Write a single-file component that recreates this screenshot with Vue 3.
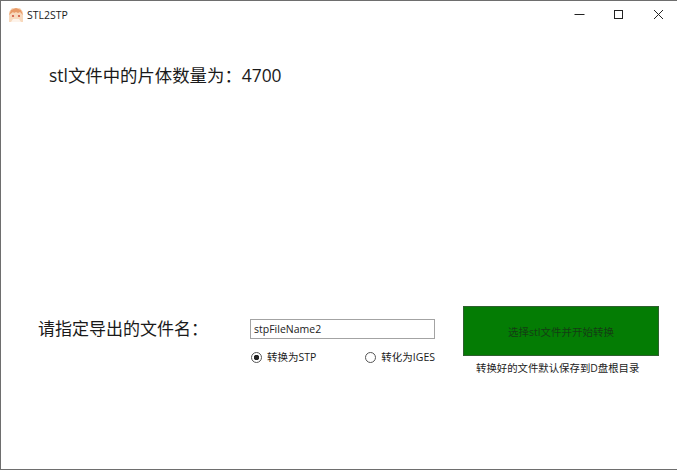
<script setup>
import { ref } from 'vue'

const fileName = ref('stpFileName2')
const format = ref('stp')
</script>

<template>
  <div class="window">
    <header class="titlebar">
      <svg class="app-icon" width="16" height="16" viewBox="0 0 16 16">
        <path d="M1 15V5l3-4h8l3 4v10z" fill="#f8d9bd" />
        <path d="M1 8l2-5 5-2 5 2 2 5-3-3-2 1-2-1-2 1-1-1z" fill="#e89a68" />
        <circle cx="5" cy="9" r="1.1" fill="#d0553f" />
        <circle cx="11" cy="9" r="1.1" fill="#d0553f" />
        <path d="M3 15l2-3h6l2 3z" fill="#fdf3ea" />
      </svg>
      <span class="title">STL2STP</span>
      <div class="controls">
        <button class="ctl ctl-min">
          <svg width="11" height="11" viewBox="0 0 11 11"><path d="M0.5 5.5h10" stroke="#222" fill="none" /></svg>
        </button>
        <button class="ctl">
          <svg width="11" height="11" viewBox="0 0 11 11"><rect x="1.5" y="1.5" width="8" height="8" stroke="#222" fill="none" /></svg>
        </button>
        <button class="ctl">
          <svg width="11" height="11" viewBox="0 0 11 11"><path d="M1 1l9 9M10 1l-9 9" stroke="#222" fill="none" /></svg>
        </button>
      </div>
    </header>

    <main class="content">
      <p class="count">stl文件中的片体数量为：4700</p>

      <section class="export-row">
        <label class="name-label">请指定导出的文件名：</label>

        <div class="options">
          <input v-model="fileName" class="name-input" type="text" />
          <div class="radios">
            <label class="radio" @click="format = 'stp'">
              <span class="dot" :class="{ on: format === 'stp' }"></span>转换为STP
            </label>
            <label class="radio" @click="format = 'iges'">
              <span class="dot" :class="{ on: format === 'iges' }"></span>转化为IGES
            </label>
          </div>
        </div>

        <div class="action">
          <button class="convert">选择stl文件并开始转换</button>
          <p class="hint">转换好的文件默认保存到D盘根目录</p>
        </div>
      </section>
    </main>
  </div>
</template>

<style scoped>
.window {
  box-sizing: border-box;
  width: 677px;
  height: 470px;
  display: flex;
  flex-direction: column;
  background: #fff;
  border: 1px solid #6e6e6e;
  border-right: none;
  font-family: "Open Sans", "Noto Sans CJK SC", sans-serif;
  color: #1a1a1a;
}

.titlebar {
  height: 28px;
  display: flex;
  align-items: center;
  padding-left: 7px;
  flex: none;
}

.app-icon {
  margin-right: 3px;
}

.title {
  font-size: 10.5px;
}

.controls {
  display: flex;
  margin: -2px 0 0 auto;
}

.ctl {
  width: 40px;
  height: 26px;
  padding: 0 0 0 2px;
  border: none;
  background: none;
  display: flex;
  align-items: center;
  justify-content: center;
}

.ctl-min {
  padding-left: 4px;
}

.content {
  flex: 1;
  display: flex;
  flex-direction: column;
}

.count {
  margin: 33px 0 0 48px;
  font-size: 17.4px;
  line-height: 26px;
}

.export-row {
  margin-top: 218px;
  display: flex;
  align-items: flex-start;
}

.name-label {
  width: 212px;
  margin: 11px 0 0 37px;
  font-size: 17px;
  line-height: 24px;
}

.options {
  width: 185px;
  margin-top: 13px;
}

.name-input {
  box-sizing: border-box;
  display: block;
  width: 185px;
  height: 20px;
  padding: 0 3px;
  border: 1px solid #a3a3a3;
  outline: none;
  font: 10.5px "Open Sans", "Noto Sans CJK SC", sans-serif;
  color: #222;
}

.radios {
  display: flex;
  justify-content: space-between;
  margin-top: 11px;
}

.radio {
  display: flex;
  align-items: center;
  font-size: 10.5px;
  line-height: 14px;
}

.dot {
  box-sizing: border-box;
  width: 11px;
  height: 11px;
  margin: 0 5px 0 1px;
  border: 1px solid #555;
  border-radius: 50%;
  background: #fff;
}

.dot.on {
  background: radial-gradient(circle, #222 0 2.5px, #fff 3px);
}

.action {
  margin-left: 28px;
  width: 196px;
}

.convert {
  display: block;
  box-sizing: border-box;
  width: 196px;
  height: 50px;
  padding: 0;
  border: 1px solid #2e5f2e;
  background: #047c04;
  font: 10.5px "Open Sans", "Noto Sans CJK SC", sans-serif;
  color: #143d14;
}

.hint {
  margin: 5px 0 0 13px;
  font-size: 10.4px;
  line-height: 14px;
  white-space: nowrap;
}
</style>
